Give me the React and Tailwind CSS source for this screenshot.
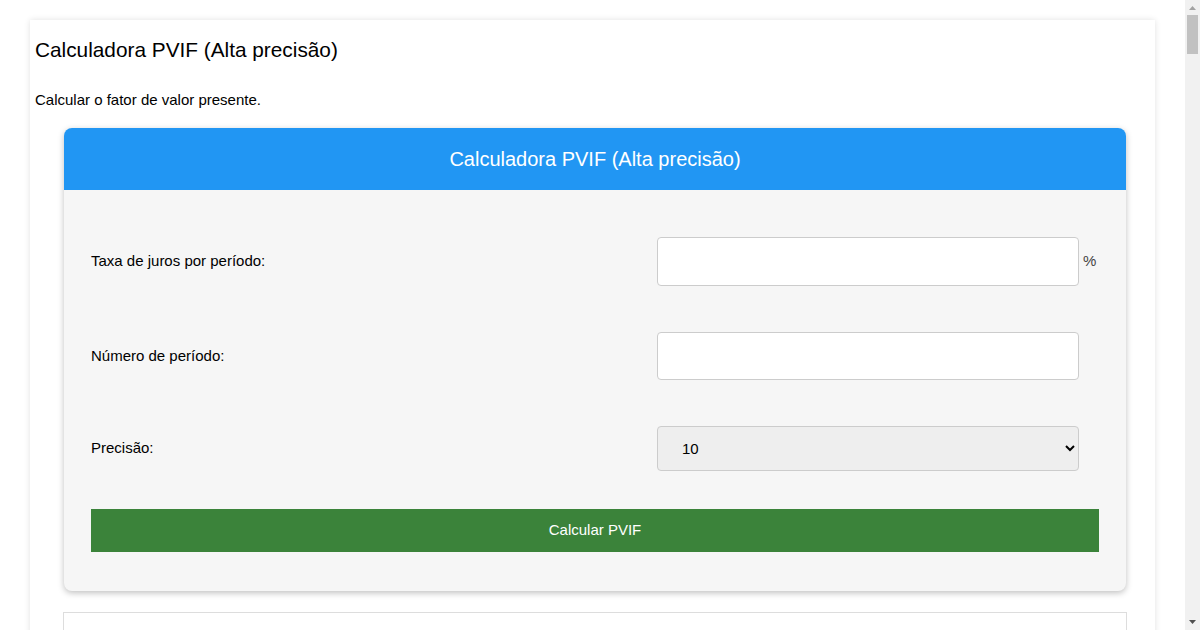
import React from "react";

function Scrollbar() {
  return (
    <div className="flex h-[630px] w-[15px] shrink-0 flex-col items-center bg-[#f1f1f1]">
      <svg width="15" height="15" viewBox="0 0 15 15" className="shrink-0">
        <polygon points="4,10 11,10 7.5,6" fill="#a3a3a3" />
      </svg>
      <div className="h-[39px] w-[11px] bg-[#c1c1c1]" />
      <div className="flex-1" />
      <svg width="15" height="15" viewBox="0 0 15 15" className="shrink-0">
        <polygon points="4,5 11,5 7.5,9" fill="#505050" />
      </svg>
    </div>
  );
}

export default function App() {
  return (
    <div className="flex h-[630px] overflow-hidden bg-white font-['Liberation_Sans',Arial,sans-serif] text-black">
      <div className="min-w-0 flex-1">
        <div className="mx-[30px] mt-[20px] bg-white pl-[5px] pt-[17px] shadow-[0_0_6px_rgba(0,0,0,0.12)]">
          <h1 className="text-[20.8px] leading-[26px]">Calculadora PVIF (Alta precisão)</h1>
          <p className="mt-[28px] text-[15px] leading-[18px]">Calcular o fator de valor presente.</p>

          <div className="ml-[29px] mr-[29px] mt-[19px] overflow-hidden rounded-[8px] bg-[#f6f6f6] shadow-[0_2px_6px_rgba(0,0,0,0.25)]">
            <div className="flex h-[62px] items-center justify-center bg-[#2196f3] text-[20px] text-white">
              Calculadora PVIF (Alta precisão)
            </div>
            <div className="px-[27px] pb-[39px] pt-[24px]">
              <div className="flex items-center py-[23px]">
                <label className="w-[566px] shrink-0 text-[15px]">Taxa de juros por período:</label>
                <input className="h-[49px] w-[422px] rounded-[4px] border border-[#ccc] bg-white" />
                <span className="ml-[4px] text-[15px] text-[#444]">%</span>
              </div>
              <div className="flex items-center py-[23px]">
                <label className="w-[566px] shrink-0 text-[15px]">Número de período:</label>
                <input className="h-[48px] w-[422px] rounded-[4px] border border-[#ccc] bg-white" />
              </div>
              <div className="flex items-center py-[23px]">
                <label className="w-[566px] shrink-0 text-[15px]">Precisão:</label>
                <select
                  defaultValue="10"
                  className="h-[45px] w-[422px] rounded-[4px] border border-[#ccc] bg-[#eee] pl-[20px] pr-[6px] text-[15px]"
                >
                  <option value="10">10</option>
                  <option value="20">20</option>
                  <option value="30">30</option>
                </select>
              </div>
              <button className="mt-[15px] h-[43px] w-full bg-[#3b833a] text-[15px] text-white">Calcular PVIF</button>
            </div>
          </div>

          <div className="ml-[28px] mr-[28px] mt-[21px] h-[400px] border border-[#ddd] bg-white"></div>
        </div>
      </div>
      <Scrollbar />
    </div>
  );
}
